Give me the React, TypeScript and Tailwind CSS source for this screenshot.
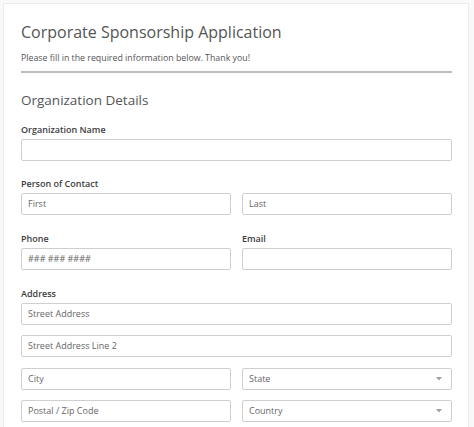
import React from "react";

const font = { fontFamily: '"Open Sans", "Liberation Sans", sans-serif' };

function Label({ children }: { children: React.ReactNode }) {
  return (
    <div className="pt-[1px] text-[9px] leading-[12px] font-semibold text-[#3d3d3d] mb-[3px]">
      {children}
    </div>
  );
}

function Input({ placeholder = "" }: { placeholder?: string }) {
  return (
    <div className="h-[22px] w-full rounded-[2px] border border-[#cfcfcf] bg-white flex items-center px-[6px] text-[9px] text-[#666666]">
      {placeholder}
    </div>
  );
}

function Select({ placeholder }: { placeholder: string }) {
  return (
    <div className="h-[22px] w-full rounded-[2px] border border-[#cfcfcf] bg-white flex items-center justify-between pl-[6px] pr-[9px] text-[9px] text-[#666666]">
      <span>{placeholder}</span>
      <svg width="6" height="4" viewBox="0 0 6 4">
        <path d="M0 0 L6 0 L3 3.5 Z" fill="#a0a0a0" />
      </svg>
    </div>
  );
}

export default function App() {
  return (
    <div className="w-[474px] h-[427px] overflow-hidden bg-[#f9f9f9] pt-[3px] pl-[3px]" style={font}>
      <div className="w-[466px] h-[440px] bg-white border border-[#ececec] pl-[17px] pr-[16px] pt-[16px]">
        <div className="text-[16px] leading-[24px] text-[#555555]">
          Corporate Sponsorship Application
        </div>
        <div className="mt-[8px] text-[8.8px] leading-[12px] text-[#555555]">
          Please fill in the required information below. Thank you!
        </div>
        <div className="mt-[7px] h-[2px] bg-[#bdbdbd]" />
        <div className="mt-[17px] text-[13.5px] leading-[20px] text-[#555555]">
          Organization Details
        </div>

        <div className="mt-[13px]">
          <Label>Organization Name</Label>
          <Input />
        </div>

        <div className="mt-[16px]">
          <Label>Person of Contact</Label>
          <div className="grid grid-cols-2 gap-[11px]">
            <Input placeholder="First" />
            <Input placeholder="Last" />
          </div>
        </div>

        <div className="mt-[16.5px] grid grid-cols-2 gap-[11px]">
          <div>
            <Label>Phone</Label>
            <Input placeholder="### ### ####" />
          </div>
          <div>
            <Label>Email</Label>
            <Input />
          </div>
        </div>

        <div className="mt-[17px]">
          <Label>Address</Label>
          <div className="flex flex-col gap-[10.5px]">
            <Input placeholder="Street Address" />
            <Input placeholder="Street Address Line 2" />
            <div className="grid grid-cols-2 gap-[11px]">
              <Input placeholder="City" />
              <Select placeholder="State" />
            </div>
            <div className="grid grid-cols-2 gap-[11px]">
              <Input placeholder="Postal / Zip Code" />
              <Select placeholder="Country" />
            </div>
          </div>
        </div>
      </div>
    </div>
  );
}
